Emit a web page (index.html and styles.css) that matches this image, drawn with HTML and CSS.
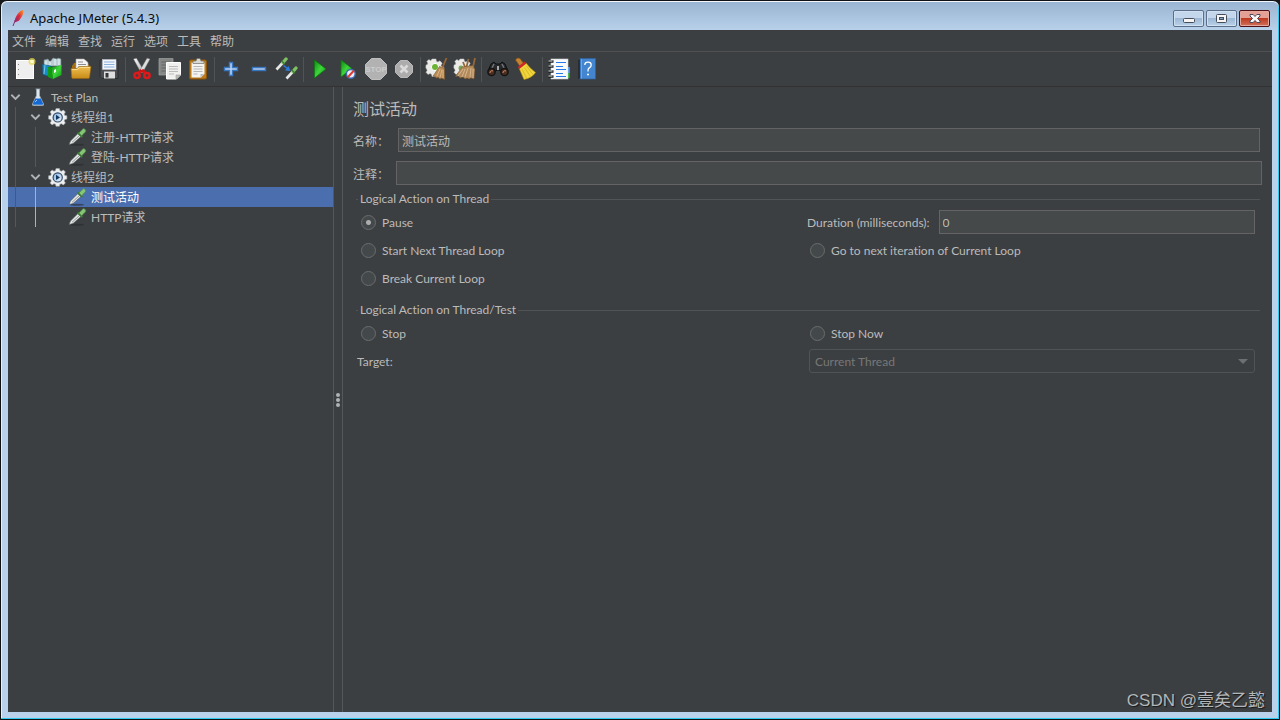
FILE: index.html
```html
<!DOCTYPE html>
<html lang="zh-CN">
<head>
<meta charset="utf-8">
<title>Apache JMeter (5.4.3)</title>
<link rel="stylesheet" href="styles.css">
</head>
<body>
<svg class="defs" width="0" height="0" aria-hidden="true">
  <defs>
    <linearGradient id="gold" x1="0" y1="0" x2="0" y2="1"><stop offset="0" stop-color="#f0c050"/><stop offset="1" stop-color="#c88a18"/></linearGradient>
    <linearGradient id="green" x1="0" y1="0" x2="1" y2="1"><stop offset="0" stop-color="#0a8a10"/><stop offset=".5" stop-color="#3fd43c"/><stop offset="1" stop-color="#0a9a10"/></linearGradient>
    <linearGradient id="feather" x1="1" y1="0" x2="0" y2="1"><stop offset="0" stop-color="#f59a2a"/><stop offset=".5" stop-color="#e0303c"/><stop offset="1" stop-color="#8a2a80"/></linearGradient>
    <linearGradient id="steel" x1="0" y1="0" x2="1" y2="1"><stop offset="0" stop-color="#ffffff"/><stop offset="1" stop-color="#a8aaac"/></linearGradient>
    <linearGradient id="lens" x1="0" y1="0" x2="1" y2="1"><stop offset="0" stop-color="#7fb0e0"/><stop offset="1" stop-color="#eef7fd"/></linearGradient>
    <symbol id="dropper" viewBox="0 0 20 20">
      <ellipse cx="9" cy="17.800" rx="7" ry="1" fill="#26292b" opacity=".6"/>
      <path d="M1 17.500l1.500-3.500L10 6.500l3 3-8 7z" fill="#e6e8e6" stroke="#50585a" stroke-width=".6"/>
      <path d="M4 15.300l7.500-6.800" stroke="#8d9799" stroke-width="1"/>
      <path d="M9.700 5.500l4.600 4.600" stroke="#3d7a35" stroke-width="2"/>
      <path d="M11 6L14.500 2.200c1.300-1.600 4.300.8 2.800 2.700l-3.600 3.800z" fill="#84c576" stroke="#4f8a48" stroke-width=".7"/>
    </symbol>
    <symbol id="gear" viewBox="0 0 20 20">
      <path d="M8 1.500h3.400l.5 2.100 1.500.6 2-1.200 2 2-1.200 1.900.6 1.500 2.100.4v3.300l-2.100.5-.6 1.500 1.200 1.800-2 2-2-1.200-1.500.6-.5 2H8l-.5-2-1.500-.6-1.900 1.200-2-2 1.200-1.800-.6-1.500-2.100-.5V8.800l2.100-.4.6-1.500L2.100 5l2-2L6 4.200l1.500-.6z" fill="#eceeef" stroke="#a3a8ab" stroke-width=".6"/>
      <circle cx="9.700" cy="10.400" r="4.600" fill="url(#lens)" stroke="#33496a" stroke-width="1.200"/>
      <path d="M8 7.800l4 2.600-4 2.600z" fill="#16355c"/>
    </symbol>
    <symbol id="chevron" viewBox="0 0 10 10"><path d="M1.200 2.500l3.800 3.800L8.800 2.500" fill="none" stroke="#afb1b3" stroke-width="1.700"/></symbol>
    <symbol id="cog" viewBox="0 0 24 24">
      <path d="M7 2h4l.4 2.200 1.500.700 2-1.100 2.300 2.400-1.200 2 .6 1.400 2.200.4v3.600l-2.200.5-.600 1.400 1.200 1.900-2.300 2.400-2-1.200-1.500.600L11 19.500H7l-.5-2.200L5 16.600l-2 .900-2-2.200 1.200-1.900-.6-1.500L.8 11 1 8l1.500-.6.300-1.400L1.800 4.500l2-2 2 1.200z" fill="#ebecea" stroke="#b8bbb8" stroke-width=".5"/>
    </symbol>
  </defs>
</svg>
<div class="window">
  <header class="titlebar">
    <svg class="app-icon" viewBox="0 0 16 18"><path d="M3 17l2.300-6" stroke="#8a2a70" stroke-width="1"/><path d="M4.500 13.500C4.500 9 8 2.500 12.500 1c1.800 1 .6 4-.4 6L9 11.800z" fill="url(#feather)"/><path d="M5.300 13L10 5.500" stroke="#a01c4a" stroke-width=".5"/></svg>
    <h1 class="app-title">Apache JMeter (5.4.3)</h1>
    <div class="window-buttons">
      <button class="win-btn" aria-label="最小化"><svg viewBox="0 0 30 16"><rect x="9.500" y="7.500" width="11" height="4" rx="1" fill="#f5f5f5" stroke="#464c58"/></svg></button>
      <button class="win-btn" aria-label="最大化"><svg viewBox="0 0 30 16"><rect x="9.500" y="3.500" width="10" height="8" rx="1" fill="#f5f5f5" stroke="#464c58"/><rect x="12.500" y="6.500" width="4" height="2" fill="#7fa0c8" stroke="#464c58"/></svg></button>
      <button class="win-btn win-close" aria-label="关闭"><svg viewBox="0 0 30 16"><path d="M10 3.500h3.200L15 5.500l1.800-2H20V5l-2.500 2.500L20 10v1.500h-3.200L15 9.500l-1.800 2H10V10l2.500-2.500L10 5z" fill="#f7f7f7" stroke="#50465a"/></svg></button>
    </div>
  </header>
  <div class="client">
    <nav class="menubar">
      <button>文件</button><button>编辑</button><button>查找</button><button>运行</button><button>选项</button><button>工具</button><button>帮助</button>
    </nav>
    <div class="toolbar" role="toolbar">
      <button aria-label="新建"><svg viewBox="0 0 24 24"><rect x="3.500" y="3.500" width="17" height="18" fill="#efefef" stroke="#fff"/><path d="M5.500 7v1M5.500 12v1M5.500 17v1" stroke="#888"/><circle cx="19" cy="4.500" r="3.500" fill="#e8d957" opacity=".75"/><circle cx="19" cy="4.500" r="1.800" fill="#fffbd0"/></svg></button>
      <button aria-label="模板"><svg viewBox="0 0 24 24"><path d="M3 3l4-1 2 3 3-4 4 1 1-1 3 1v7H3z" fill="#b9cdd3" stroke="#6e858c" stroke-width=".6"/><path d="M5 4v5M9 4v5M14 2v6M18 2v6" stroke="#e9f3f5"/><path d="M1.500 7.500L10 9v11l-8-2.500z" fill="#178cc4" stroke="#0b6090" stroke-width=".6"/><path d="M4 8l-1 9" stroke="#73c8ed"/><path d="M7 10l4-1 1 13-5-2z" fill="#0c7e12"/><path d="M10 10.500L20.500 8v10L12 22z" fill="url(#green)"/><path d="M7 10l3 .5L12 22l-5-2z" fill="#129a16"/><path d="M13 13v3l2-1v-3z" fill="#fff"/></svg></button>
      <button aria-label="打开"><svg viewBox="0 0 24 24"><path d="M3 9l2-3h4v-3h8l2 4 2 2v4H3z" fill="#a36d10"/><path d="M7 2h8l4 3.500V14H7z" fill="#f5f5f5" stroke="#aaa" stroke-width=".6"/><path d="M9 5h5M9 7.500h8M9 10h8" stroke="#8d8d8d"/><path d="M2 11.500h6l2-2h12l-1.500 11q-.1 1-1.500 1H4q-1.200 0-1.300-1z" fill="url(#gold)" stroke="#9a6710" stroke-width=".6"/><path d="M3 12.500h5.500l2-2H21" stroke="#f8d987" fill="none"/></svg></button>
      <button aria-label="保存"><svg viewBox="0 0 24 24"><path d="M3 3h18v18.500H5l-2-2z" fill="#4b4d51" stroke="#2a2c30"/><rect x="5.500" y="2.500" width="13.500" height="10" fill="#f2f5fa" stroke="#c8cdd5" stroke-width=".5"/><path d="M7 5h10.500M7 7.500h10.500M7 10h10.500" stroke="#8ab0de"/><rect x="7" y="14.500" width="11" height="7" fill="#dedede"/><rect x="8.500" y="16" width="3" height="4.500" fill="#34363a"/></svg></button>
      <span class="sep"></span>
      <button aria-label="剪切"><svg viewBox="0 0 24 24"><path d="M3.500 2l3-.8 7 12-2.500 2.500z" fill="url(#steel)" stroke="#777" stroke-width=".4"/><path d="M20 2l-3-.8-7 12 2.500 2.500z" fill="#dcdede" stroke="#777" stroke-width=".4"/><path d="M11.500 13l-3 3M12 13l3.500 3" stroke="#d01414" stroke-width="3"/><ellipse cx="7" cy="18.500" rx="2.600" ry="2.500" fill="none" stroke="#dc1a1c" stroke-width="2.600"/><ellipse cx="17" cy="18.500" rx="2.600" ry="2.500" fill="none" stroke="#dc1a1c" stroke-width="2.600"/></svg></button>
      <button aria-label="复制"><svg viewBox="0 0 24 24"><path d="M1 1.500h14V18H1z" fill="#858786" stroke="#a1a3a1" stroke-width=".7"/><path d="M3.500 5h9M3.500 8h6M3.500 11h5M3.500 14h4" stroke="#626462"/><path d="M8.500 5.500h14V18l-4 4h-10z" fill="#f0f0ee" stroke="#fff"/><path d="M11 9.500h9M11 12h9M11 14.500h9M11 17h5" stroke="#bbb"/><path d="M18 22v-4h4.500z" fill="#c2c2c0" stroke="#8c8c8a" stroke-width=".5"/></svg></button>
      <button aria-label="粘贴"><svg viewBox="0 0 24 24"><rect x="3.500" y="3" width="17" height="19" rx="1.500" fill="#bd7a16" stroke="#8b5408"/><path d="M5.500 5.500h13V17l-3.500 3.500H5.500z" fill="#f3f3f1"/><path d="M7.500 9.500h9M7.500 12h9M7.500 14.500h9M7.500 17h4" stroke="#b7b7b7"/><path d="M14.500 20.500V17h4z" fill="#bababa"/><path d="M7 6.500V4h3l1-2.500h3L15 4h3v2.500z" fill="#d9dad6" stroke="#6f706c" stroke-width=".7"/></svg></button>
      <span class="sep"></span>
      <button aria-label="展开"><svg viewBox="0 0 24 24"><path d="M10.500 5.500h3v5h5v3h-5v5h-3v-5h-5v-3h5z" fill="#b6d3f4" stroke="#3876bf" stroke-width="1.400"/></svg></button>
      <button aria-label="折叠"><svg viewBox="0 0 24 24"><rect x="5.500" y="10.500" width="13" height="3" fill="#a9c9ef" stroke="#3876bf" stroke-width="1.400"/></svg></button>
      <button aria-label="切换"><svg viewBox="0 0 24 24"><path d="M1.500 12.500l6.500-7" stroke="#e5e8e6" stroke-width="2.600"/><path d="M8 5.500L11 2" stroke="#7fc065" stroke-width="3.400" stroke-linecap="round"/><path d="M6.500 3.800l3.400 3.400" stroke="#417b36" stroke-width="1.400"/><path d="M11.500 21.500l6.500-7" stroke="#e5e8e6" stroke-width="2.600"/><path d="M18 14.500l3-3.500" stroke="#7fc065" stroke-width="3.400" stroke-linecap="round"/><path d="M16.500 12.800l3.400 3.400" stroke="#417b36" stroke-width="1.400"/><path d="M8.500 8.500l4 3" stroke="#287be0" stroke-width="1.500"/><path d="M15.500 14l-5.500-.5 3.500-4.500z" fill="#287be0"/></svg></button>
      <span class="sep"></span>
      <button aria-label="启动"><svg viewBox="0 0 24 24"><path d="M6.500 3v18L18 12z" fill="url(#green)" stroke="#087c0c" stroke-width=".7"/></svg></button>
      <button aria-label="不停顿开始"><svg viewBox="0 0 24 24"><path d="M5 3v17l11-8.500z" fill="url(#green)" stroke="#087c0c" stroke-width=".7"/><circle cx="14.800" cy="16.800" r="4.400" fill="#e9eef6" stroke="#3e68af" stroke-width="1.500"/><path d="M12 20l6-6.500" stroke="#df3b30" stroke-width="2"/></svg></button>
      <button aria-label="停止"><svg viewBox="0 0 24 24"><path d="M7.500 1.500h9l6 6v9l-6 6h-9l-6-6v-9z" fill="#b2b2b2" stroke="#bfbfbf"/><text x="12" y="15" text-anchor="middle" class="stop-text">STOP</text></svg></button>
      <button aria-label="关闭"><svg viewBox="0 0 24 24"><path d="M8.500 3.500h7l5 5v7l-5 5h-7l-5-5v-7z" fill="#acacac" stroke="#bababa"/><path d="M8.500 8.500l7 7M15.500 8.500l-7 7" stroke="#dadada" stroke-width="2.600"/></svg></button>
      <span class="sep"></span>
      <button aria-label="清除"><svg viewBox="0 0 24 24"><use href="#cog"/><circle cx="10" cy="10" r="3.600" fill="#6bb334" stroke="#fff"/><path d="M21.500 1l-4 9.500" stroke="#956637" stroke-width="1.800"/><path d="M14.500 9.500l5 2 .2 11-3-1.200-2 .8-1.200-1.500-2.500.4-1-1.800H8z" fill="#b98c57" stroke="#795127" stroke-width=".6"/><path d="M15 12l-3 7M17 12.500l-2 8M18 13v8" stroke="#e1bf8e" stroke-width=".8"/></svg></button>
      <button aria-label="清除全部"><svg viewBox="0 0 24 24"><use href="#cog"/><circle cx="8" cy="11" r="2.500" fill="#75a755"/><path d="M15.500 2l-2 8M22 1l-2 9M10 5l2 5" stroke="#956637" stroke-width="1.800"/><path d="M9 10l11-1.500 2 4-1 9.500-3-1-2 1-2-1-2 1-2-2-3 1-1.500-2-3 .500z" fill="#b28a5c" stroke="#795127" stroke-width=".5"/><path d="M10 12l-5 7M12 12l-3 8M15 11l-3 9M18 11l-1 9M20 12v9" stroke="#dfc099" stroke-width=".8"/></svg></button>
      <span class="sep"></span>
      <button aria-label="查找"><svg viewBox="0 0 24 24"><path d="M5 7l3-2 2 2h4l2-2 3 2 3 7-4 3-5-4h-2l-5 4-4-3z" fill="#27282a" stroke="#0d0e0f"/><path d="M8 7l-3 6M16 7l3 6" stroke="#727478" stroke-width="1.500"/><circle cx="5.500" cy="15" r="3.600" fill="#4b2e22" stroke="#141414" stroke-width="1.500"/><circle cx="18.500" cy="15" r="3.600" fill="#4b2e22" stroke="#141414" stroke-width="1.500"/><path d="M4 16a2 2 0 0 1 3-2M17 16a2 2 0 0 1 3-2" stroke="#cf8963" fill="none"/><path d="M11 9h2v4h-2z" fill="#a7a9ac"/></svg></button>
      <button aria-label="重置查找"><svg viewBox="0 0 24 24"><path d="M1.500 3q1.500-3 4.500-1.500l4 5.500-3.500 3z" fill="#c68330" stroke="#8a5313" stroke-width=".6"/><path d="M5 11l7-5q4 5.500 9.500 9.500-3.500 5.500-11.500 7z" fill="#f0d53c" stroke="#b5920d" stroke-width=".6"/><path d="M8 12l4.500 9M10.500 10.500l6 9M12.500 9l6.500 8.500" stroke="#cdaa1d" stroke-width=".7"/><path d="M4.500 11l7-5.500" stroke="#cf2727" stroke-width="2.600"/></svg></button>
      <span class="sep"></span>
      <button aria-label="函数助手"><svg viewBox="0 0 24 24"><path d="M20 10h3v6h-3z" fill="#3d8df5"/><path d="M20 16h3v5h-3z" fill="#16a51b"/><rect x="4" y="2" width="17" height="20" fill="#f8f9fb" stroke="#cdd0d5" stroke-width=".6"/><path d="M9 5.500h10M9 9.500h7M9 12.500h10M9 16.500h7M9 19.500h10" stroke="#2879e8" stroke-width="1"/><path d="M1.500 4.500h5M1.500 9.500h5M1.500 14.500h5M1.500 19.500h5" stroke="#17191b" stroke-width="2.500"/><path d="M1.500 4h4M1.500 9h4M1.500 14h4M1.500 19h4" stroke="#e8e8e8" stroke-width="1"/></svg></button>
      <button aria-label="帮助"><svg viewBox="0 0 24 24"><path d="M3.500 3l2-1.500V21l-2 1z" fill="#17191c"/><rect x="5" y="1.500" width="15.500" height="20.500" fill="#4385cf" stroke="#2e63a3" stroke-width=".7"/><path d="M6.500 2v19.500" stroke="#6da5e1"/><path d="M9.800 8q0-2.800 3.200-2.800 3.200 0 3.200 2.800 0 1.800-1.900 2.900-1.300.8-1.300 2.700v1" fill="none" stroke="#fff" stroke-width="1.300"/><circle cx="13" cy="17.500" r="1" fill="#fff"/></svg></button>
    </div>
    <main class="workspace">
      <ul class="tree">
        <li class="node"><span class="toggle"><svg><use href="#chevron"/></svg></span><svg class="node-icon" viewBox="0 0 20 20"><path d="M7.500 2h5M8.500 2v6.500L4.500 17q-.5 1.500 1 1.500h9q1.500 0 1-1.500l-4-8.500V2" fill="#dfe6eb" stroke="#9babb6" stroke-width=".8"/><path d="M7.300 11.500h5.400l2.300 5q.5 1.300-.8 1.300H5.800q-1.300 0-.8-1.300z" fill="#1469d4"/><path d="M7 15l2-2" stroke="#9bcbff"/></svg><span>Test Plan</span></li>
        <li class="node"><span class="guide"></span><span class="toggle"><svg><use href="#chevron"/></svg></span><svg class="node-icon"><use href="#gear"/></svg><span>线程组1</span></li>
        <li class="node"><span class="guide"></span><span class="guide"></span><span class="indent"></span><svg class="node-icon"><use href="#dropper"/></svg><span>注册-HTTP请求</span></li>
        <li class="node"><span class="guide"></span><span class="guide"></span><span class="indent"></span><svg class="node-icon"><use href="#dropper"/></svg><span>登陆-HTTP请求</span></li>
        <li class="node"><span class="guide"></span><span class="toggle"><svg><use href="#chevron"/></svg></span><svg class="node-icon"><use href="#gear"/></svg><span>线程组2</span></li>
        <li class="node selected"><span class="guide"></span><span class="guide active"></span><span class="indent"></span><svg class="node-icon"><use href="#dropper"/></svg><span>测试活动</span></li>
        <li class="node"><span class="guide"></span><span class="guide active"></span><span class="indent"></span><svg class="node-icon"><use href="#dropper"/></svg><span>HTTP请求</span></li>
      </ul>
      <div class="splitter"><i></i><i></i><i></i></div>
      <form class="panel">
        <h2 class="panel-title">测试活动</h2>
        <div class="field name-field"><label for="name">名称：</label><input id="name" type="text" value="测试活动"></div>
        <div class="field comment-field"><label for="comment">注释：</label><input id="comment" type="text"></div>
        <fieldset>
          <legend>Logical Action on Thread</legend>
          <div class="options">
            <label class="option"><input type="radio" name="action" checked><span>Pause</span></label>
            <div class="duration"><label for="duration">Duration (milliseconds):</label><input id="duration" type="text" value="0"></div>
            <label class="option"><input type="radio" name="action"><span>Start Next Thread Loop</span></label>
            <label class="option"><input type="radio" name="action"><span>Go to next iteration of Current Loop</span></label>
            <label class="option"><input type="radio" name="action"><span>Break Current Loop</span></label>
          </div>
        </fieldset>
        <fieldset>
          <legend>Logical Action on Thread/Test</legend>
          <div class="options">
            <label class="option"><input type="radio" name="action"><span>Stop</span></label>
            <label class="option"><input type="radio" name="action"><span>Stop Now</span></label>
            <label class="target-label" for="target">Target:</label>
            <div class="select-wrap"><select id="target" disabled><option>Current Thread</option></select></div>
          </div>
        </fieldset>
      </form>
    </main>
  </div>
  <div class="watermark">CSDN @壹矣乙懿</div>
</div>
</body>
</html>
```
FILE: styles.css
```css
* { box-sizing: border-box; }

html, body { height: 100%; }

body {
  margin: 0;
  background: #16181a;
  font: 12px/16px Lato, "Noto Sans CJK SC", sans-serif;
  font-variant-ligatures: none;
  color: #bbbbbb;
}

.defs { position: absolute; }

button, input, select { font: inherit; color: inherit; }

button { border: 0; padding: 0; background: none; }

.window {
  position: relative;
  display: flex;
  flex-direction: column;
  height: 100%;
  padding: 0 7px 7px;
  border: 1px solid #101214;
  border-radius: 7px 7px 0 0;
  background: linear-gradient(#99b4d1, #b9d1ea 30px) #b9d1ea;
  box-shadow: inset 0 1px #f4f8fc, inset -1px -1px #2fc9f0, inset 1px 0 #e8f1fa;
}

.titlebar {
  display: flex;
  align-items: center;
  height: 29px;
  flex: none;
  padding: 5px 2px 0;
}

.app-icon { width: 16px; height: 18px; margin-right: 4px; }

.app-title {
  flex: 1;
  margin: 0;
  font: 400 13px/16px "Noto Sans", sans-serif;
  color: #0c0c0c;
}

.window-buttons { display: flex; gap: 2px; }

.win-btn {
  width: 31px;
  height: 17px;
  display: grid;
  place-items: center;
  border: 1px solid #5d6f88;
  border-radius: 2px;
  background: linear-gradient(#c3d6eb 48%, #9db8d5 50%, #b9d2ea);
  box-shadow: inset 0 0 0 1px #cfe0f1;
}

.win-btn svg { width: 30px; height: 16px; }

.win-close {
  border-color: #4c1016;
  background: linear-gradient(#e4a095 45%, #bd3a21 50%, #d3705a);
  box-shadow: inset 0 0 0 1px #e3a79d;
}

.client {
  display: flex;
  flex-direction: column;
  flex: 1;
  min-height: 0;
  background: #3c3f41;
}

.menubar {
  display: flex;
  gap: 9px;
  height: 22px;
  padding: 2px 0 0 4px;
  border-bottom: 1px solid #515151;
}

.toolbar {
  display: flex;
  align-items: center;
  height: 35px;
  padding-left: 3px;
  border-bottom: 1px solid #323232;
}

.toolbar button {
  width: 28px;
  height: 28px;
  display: grid;
  place-items: center;
}

.toolbar svg { width: 24px; height: 24px; }

.stop-text {
  font: 700 8px "Liberation Sans", sans-serif;
  fill: #cccccc;
}

.sep {
  width: 1px;
  height: 25px;
  margin: 0 2px;
  background: #515355;
}

.workspace { display: flex; flex: 1; min-height: 0; }

.tree {
  width: 325px;
  flex: none;
  margin: 0;
  padding: 0;
  list-style: none;
}

.node { display: flex; align-items: center; height: 20px; }

.node > span:last-child { margin-left: 3px; padding-top: 2px; }

.guide {
  width: 13px;
  height: 20px;
  margin-left: 7px;
  border-left: 1px solid #55585a;
}

.guide.active { border-color: #7fbdf2; }

.indent { width: 20px; }

.toggle { width: 20px; padding-left: 2px; display: flex; }

.toggle svg { width: 11px; height: 11px; }

.node-icon { width: 20px; height: 20px; }

.selected { background: #4b6eaf; color: #ffffff; }

.splitter {
  width: 10px;
  flex: none;
  display: flex;
  flex-direction: column;
  align-items: center;
  justify-content: center;
  gap: 1px;
  border: solid #55585a;
  border-width: 0 1px;
}

.splitter i {
  width: 4px;
  height: 4px;
  border-radius: 50%;
  background: #afb1b3;
}

.panel { flex: 1; min-width: 0; padding: 10px 10px 0; }

.panel-title {
  margin: 0 0 7px;
  font-size: 16px;
  line-height: 24px;
  font-weight: 400;
}

.field { display: flex; align-items: center; margin-bottom: 9px; }

.field input { flex: 1; min-width: 0; }

.field label { padding-top: 3px; }

.name-field { padding-right: 2px; }
.name-field label { width: 45px; }
.comment-field label { width: 43px; }

.comment-field { margin-bottom: 6px; }

input[type="text"] {
  height: 24px;
  padding: 1px 3px 0;
  border: 1px solid #646464;
  background: #45494a;
}

fieldset {
  min-width: 0;
  margin: 0 2px 10px 3px;
  padding: 1px 5px 0 1px;
  border: 0 solid #515355;
  border-top-width: 1px;
}

legend { margin-left: 1px; padding: 0 2px; }

.options {
  display: grid;
  grid-template-columns: 1fr 1fr;
  grid-auto-rows: 28px;
  align-items: center;
}

.option { display: flex; align-items: center; padding-left: 4px; }

.option span, .target-label, .duration label { padding-top: 2px; }

input[type="radio"] {
  appearance: none;
  width: 15px;
  height: 15px;
  margin: 0 6px 0 0;
  border: 1px solid #6b6b6b;
  border-radius: 50%;
  background: #43494a;
}

input[type="radio"]:checked {
  background: radial-gradient(circle, #adadad 2px, #43494a 3px);
}

.duration { display: flex; align-items: center; gap: 9px; padding-left: 1px; }

.duration input { flex: 1; min-width: 0; }

.select-wrap { display: flex; position: relative; padding-left: 3px; }

.select-wrap::after {
  content: "";
  position: absolute;
  right: 7px;
  top: 10px;
  border: solid transparent;
  border-width: 5px 5px 0;
  border-top-color: #6d6f71;
}

select {
  appearance: none;
  flex: 1;
  height: 24px;
  padding: 2px 5px 0;
  border: 1px solid #515355;
  border-radius: 3px;
  background: #3c3f41;
}

select:disabled { color: #777777; opacity: 1; }

.watermark {
  position: absolute;
  right: 14px;
  bottom: 6px;
  font: 17px/24px "Liberation Sans", "Noto Sans CJK SC", sans-serif;
  color: #b4b6b7;
  text-shadow: 1px 1px 1px #17191a;
}
```
